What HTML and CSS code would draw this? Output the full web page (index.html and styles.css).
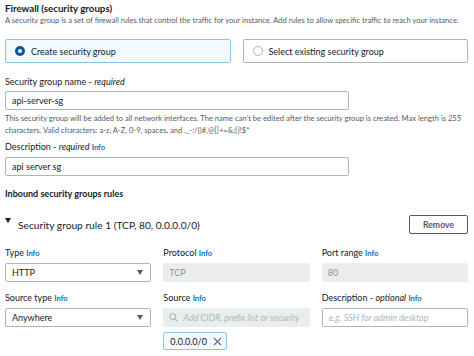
FILE: index.html
```html
<!DOCTYPE html>
<html lang="en">
<head>
  <meta charset="UTF-8" />
  <title>Firewall (security groups)</title>
  <link rel="stylesheet" href="styles.css">
</head>
<body>

  <section class="firewall">
    <h2>Firewall (security groups)</h2>
    <p class="desc">A security group is a set of firewall rules that control the traffic for your instance. Add rules to allow specific traffic to reach your instance.</p>

    <div class="tiles">
      <label class="tile selected"><span class="radio on"></span>Create security group</label>
      <label class="tile"><span class="radio"></span>Select existing security group</label>
    </div>

    <div class="field">
      <div class="label">Security group name - <i>required</i></div>
      <input class="input wide" type="text" value="api-server-sg">
      <p class="help">This security group will be added to all network interfaces. The name can't be edited after the security group is created. Max length is 255 characters. Valid characters: a-z, A-Z, 0-9, spaces, and ._-:/()#,@[]+=&amp;;{}!$*</p>
    </div>

    <div class="field desc-field">
      <div class="label">Description - <i>required</i> <a class="info">Info</a></div>
      <input class="input wide" type="text" value="api server sg">
    </div>

    <h3>Inbound security groups rules</h3>

    <div class="rule-head">
      <div class="rule-title"><span class="caret"></span>Security group rule 1 (TCP, 80, 0.0.0.0/0)</div>
      <button class="btn">Remove</button>
    </div>

    <div class="rule-grid">
      <div class="field">
        <div class="label">Type <a class="info">Info</a></div>
        <div class="input select">HTTP<span class="arrow"></span></div>
      </div>
      <div class="field">
        <div class="label">Protocol <a class="info">Info</a></div>
        <div class="input disabled">TCP</div>
      </div>
      <div class="field">
        <div class="label">Port range <a class="info">Info</a></div>
        <div class="input disabled">80</div>
      </div>

      <div class="field">
        <div class="label">Source type <a class="info">Info</a></div>
        <div class="input select">Anywhere<span class="arrow"></span></div>
      </div>
      <div class="field">
        <div class="label">Source <a class="info">Info</a></div>
        <div class="input disabled search">
          <svg width="9" height="9" viewBox="0 0 10 10"><circle cx="4" cy="4" r="3.2" fill="none" stroke="#aab7b8" stroke-width="1.3"/><path d="M6.4 6.4 L9.2 9.2" stroke="#aab7b8" stroke-width="1.4"/></svg>
          <i>Add CIDR, prefix list or security</i>
        </div>
        <span class="chip">0.0.0.0/0
          <svg width="9" height="9" viewBox="0 0 10 10"><path d="M1 1 L9 9 M9 1 L1 9" stroke="#545b64" stroke-width="1.2"/></svg>
        </span>
      </div>
      <div class="field">
        <div class="label">Description - <i>optional</i> <a class="info">Info</a></div>
        <div class="input placeholder"><i>e.g. SSH for admin desktop</i></div>
      </div>
    </div>
  </section>

</body>
</html>
```

FILE: styles.css
```css
* { box-sizing: border-box; margin: 0; padding: 0; }
body { font-family: 'Lato', sans-serif; background: #fff; color: #16191f; padding: 2px 6px 0 5px; font-size: 9px; }

h2 { font-size: 9.7px; font-weight: 700; line-height: 13px; }
.desc { font-size: 7.6px; color: #545b64; line-height: 11px; white-space: nowrap; }

.tiles { display: grid; grid-template-columns: 1fr 1fr; gap: 12px; margin-top: 13px; }
.tile {
  display: flex;
  align-items: center;
  height: 24px;
  padding-left: 9px;
  border: 1px solid #aab7b8;
  border-radius: 2px;
  font-size: 9px;
}
.tile.selected { background: #f1faff; border-color: #8bc4e0; }
.radio {
  width: 10px; height: 10px;
  border: 1px solid #aab7b8;
  border-radius: 50%;
  margin-right: 6px;
  background: #fff;
}
.radio.on { border: 3px solid #0a5596; }

.field { margin-top: 13px; }
.desc-field { margin-top: 5px; }
.label { font-size: 9px; line-height: 12px; margin-bottom: 3px; }
.label i { font-style: italic; }
.info { color: #0073bb; font-size: 7.5px; font-weight: 700; }

.input {
  display: flex;
  align-items: center;
  height: 19px;
  border: 1px solid #aab7b8;
  border-radius: 2px;
  padding: 0 6px;
  font-family: inherit;
  font-size: 9px;
  color: #16191f;
  background: #fff;
  width: 100%;
}
.input.wide { width: 344px; }
.help { font-size: 7.6px; color: #545b64; line-height: 12px; margin-top: 2px; }

h3 { font-size: 9px; font-weight: 700; margin-top: 12px; line-height: 12px; }

.rule-head { display: flex; justify-content: space-between; align-items: center; margin-top: 15px; }
.rule-title { font-size: 10.2px; display: flex; align-items: center; }
.caret {
  width: 0; height: 0;
  border-left: 3px solid transparent;
  border-right: 3px solid transparent;
  border-top: 5px solid #16191f;
  margin: 0 7px 0 0;
  position: relative; top: -4px;
}
.btn {
  width: 59px; height: 19px;
  border: 1px solid #545b64;
  border-radius: 2px;
  background: #fff;
  font-family: inherit;
  font-size: 8.7px;
  font-weight: 700;
  color: #545b64;
}

.rule-grid { display: grid; grid-template-columns: repeat(3, 1fr); column-gap: 12px; }
.rule-grid .field { margin-top: 13px; }
.rule-grid .field:nth-child(n+4) { margin-top: 10px; }
.select { justify-content: space-between; padding-right: 7px; }
.arrow {
  width: 0; height: 0;
  border-left: 3.5px solid transparent;
  border-right: 3.5px solid transparent;
  border-top: 5px solid #545b64;
}
.disabled { background: #eaeded; border-color: #eaeded; color: #879596; padding-left: 5px; }
.search { gap: 5px; }
.search i, .placeholder i { font-size: 9px; color: #aab7b8; white-space: nowrap; overflow: hidden; }
.chip {
  display: inline-flex;
  align-items: center;
  gap: 6px;
  height: 18px;
  margin-top: 5px;
  padding: 0 4px 0 6px;
  border: 1px solid #8bc4e0;
  border-radius: 2px;
  background: #f1faff;
  font-size: 9px;
}
```
